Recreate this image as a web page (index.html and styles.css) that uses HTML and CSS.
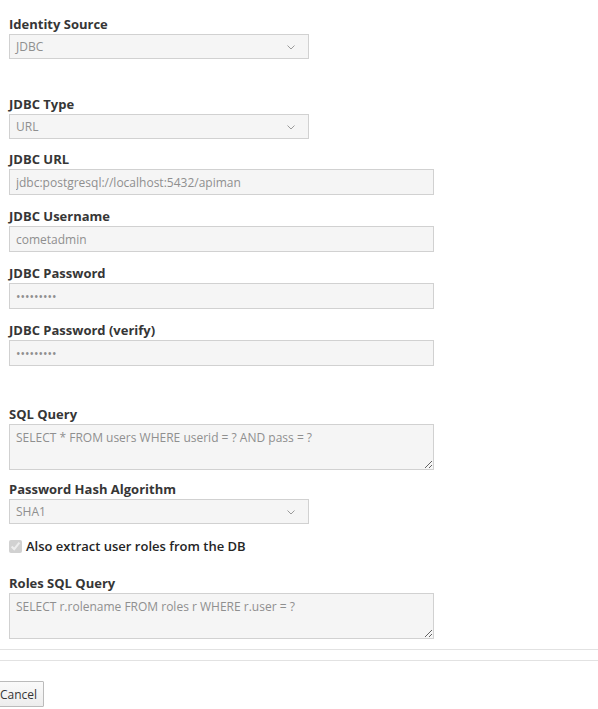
FILE: index.html
```html
<!DOCTYPE html>
<html lang="en">
<head>
<meta charset="utf-8">
<title>Identity Source</title>
<link rel="stylesheet" href="styles.css">
</head>
<body>
<form class="form">
  <div class="fields">
    <div class="group group-wide">
      <label class="label">Identity Source</label>
      <div class="select"><span>JDBC</span><svg class="chev" width="8" height="5" viewBox="0 0 8 5"><path d="M0.5 0.5 L4 4 L7.5 0.5" fill="none" stroke="#9a9a9a" stroke-width="1"/></svg></div>
    </div>
    <div class="group group-tight">
      <label class="label">JDBC Type</label>
      <div class="select"><span>URL</span><svg class="chev" width="8" height="5" viewBox="0 0 8 5"><path d="M0.5 0.5 L4 4 L7.5 0.5" fill="none" stroke="#9a9a9a" stroke-width="1"/></svg></div>
    </div>
    <div class="group">
      <label class="label">JDBC URL</label>
      <input class="input" type="text" value="jdbc:postgresql://localhost:5432/apiman" disabled>
    </div>
    <div class="group">
      <label class="label">JDBC Username</label>
      <input class="input" type="text" value="cometadmin" disabled>
    </div>
    <div class="group">
      <label class="label">JDBC Password</label>
      <input class="input" type="password" value="123456789" disabled>
    </div>
    <div class="group group-sql">
      <label class="label">JDBC Password (verify)</label>
      <input class="input" type="password" value="123456789" disabled>
    </div>
    <div class="group group-hash">
      <label class="label">SQL Query</label>
      <textarea class="textarea" disabled>SELECT * FROM users WHERE userid = ? AND pass = ?</textarea>
    </div>
    <div class="group group-check">
      <label class="label">Password Hash Algorithm</label>
      <div class="select"><span>SHA1</span><svg class="chev" width="8" height="5" viewBox="0 0 8 5"><path d="M0.5 0.5 L4 4 L7.5 0.5" fill="none" stroke="#9a9a9a" stroke-width="1"/></svg></div>
    </div>
    <div class="check-row">
      <input class="checkbox" type="checkbox" checked disabled>
      <span class="check-label">Also extract user roles from the DB</span>
    </div>
    <div class="group group-last">
      <label class="label">Roles SQL Query</label>
      <textarea class="textarea" disabled>SELECT r.rolename FROM roles r WHERE r.user = ?</textarea>
    </div>
  </div>
  <hr class="rule">
  <hr class="rule rule-second">
  <div class="actions">
    <button class="btn" type="button">Cancel</button>
  </div>
</form>
</body>
</html>
```

FILE: styles.css
```css
html, body {
  margin: 0;
  padding: 0;
  background: #ffffff;
}

body {
  font-family: "Open Sans", "Noto Sans", sans-serif;
  font-size: 12px;
  color: #363636;
}

.form {
  display: block;
}

.fields {
  padding: 14px 0 0 9px;
  display: flex;
  flex-direction: column;
  align-items: flex-start;
}

.group {
  display: flex;
  flex-direction: column;
  margin-bottom: 11px;
}

.group-wide { margin-bottom: 35px; }
.group-tight { margin-bottom: 10px; }
.group-sql { margin-bottom: 38px; }
.group-hash { margin-bottom: 9px; }
.group-check { margin-bottom: 12px; }
.group-last { margin-bottom: 10px; }

.label {
  font-size: 13px;
  font-weight: 700;
  line-height: 20px;
  height: 20px;
  color: #363636;
}

.select {
  box-sizing: border-box;
  width: 300px;
  height: 25px;
  border: 1px solid #d1d1d1;
  background: #f5f5f5;
  color: #8f8f8f;
  font-size: 12px;
  display: flex;
  align-items: center;
  justify-content: space-between;
  padding: 0 13px 0 6px;
}

.chev {
  display: block;
  margin-top: 1px;
}

.input {
  box-sizing: border-box;
  width: 425px;
  height: 26px;
  border: 1px solid #d1d1d1;
  background: #f5f5f5;
  color: #8f8f8f;
  font-family: "Open Sans", "Noto Sans", sans-serif;
  font-size: 12px;
  padding: 2px 6px;
  margin: 0;
  outline: none;
  border-radius: 0;
}

.textarea {
  box-sizing: border-box;
  width: 425px;
  height: 46px;
  border: 1px solid #d1d1d1;
  background: #f5f5f5;
  color: #8f8f8f;
  font-family: "Open Sans", "Noto Sans", sans-serif;
  font-size: 12px;
  line-height: 20px;
  padding: 3px 6px;
  margin: 0;
  resize: vertical;
  border-radius: 0;
}

.check-row {
  display: flex;
  align-items: center;
  height: 20px;
  margin-bottom: 17px;
}

.checkbox {
  width: 13px;
  height: 13px;
  margin: 0 4px 0 0;
}

.check-label {
  font-size: 13px;
  font-weight: 600;
  line-height: 20px;
  color: #252525;
}

.rule {
  border: 0;
  border-top: 1px solid #e2e2e2;
  margin: 0;
  height: 0;
}

.rule-second {
  margin-top: 10px;
}

.actions {
  padding-top: 20px;
  display: flex;
}

.btn {
  margin-left: -7px;
  height: 26px;
  padding: 2px 6px;
  font-family: "Open Sans", "Noto Sans", sans-serif;
  font-size: 12px;
  color: #363636;
  border: 1px solid #bbbbbb;
  border-radius: 1px;
  background: linear-gradient(#fafafa, #ededed);
}
```
